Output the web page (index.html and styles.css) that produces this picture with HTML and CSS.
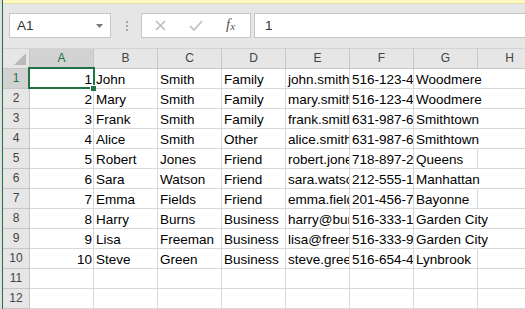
FILE: index.html
```html
<!DOCTYPE html>
<html lang="en">
<head>
    <meta charset="UTF-8">
    <meta name="viewport" content="width=device-width, initial-scale=1.0">
    <title>Contacts - Excel</title>
    <link rel="stylesheet" href="styles.css">
</head>
<body>
    <div class="window">
        <div class="edge"></div>
        <div class="app">
            <div class="notice"></div>

            <div class="formula-bar">
                <div class="name-box">
                    <span>A1</span>
                    <svg class="drop" width="7" height="4" viewBox="0 0 7 4"><polygon points="0,0 7,0 3.5,4" /></svg>
                </div>
                <svg class="grip" width="2" height="10" viewBox="0 0 2 10">
                    <rect x="0" y="0" width="2" height="2" />
                    <rect x="0" y="4" width="2" height="2" />
                    <rect x="0" y="8" width="2" height="2" />
                </svg>
                <div class="fx-buttons">
                    <svg width="11" height="11" viewBox="0 0 11 11"><path d="M1 1 L10 10 M10 1 L1 10" /></svg>
                    <svg width="14" height="11" viewBox="0 0 14 11"><path d="M1 6 L5 10 L13 1" /></svg>
                    <span class="fx">f<span class="fx-x">x</span></span>
                </div>
                <div class="formula-input">1</div>
            </div>

            <div class="sheet-wrap">
                <div class="sheet">
                    <div class="corner">
                        <svg width="26" height="19" viewBox="0 0 26 19"><polygon points="23,4 23,16 11,16" /></svg>
                    </div>
                    <div class="col-head active">A</div>
                    <div class="col-head">B</div>
                    <div class="col-head">C</div>
                    <div class="col-head">D</div>
                    <div class="col-head">E</div>
                    <div class="col-head">F</div>
                    <div class="col-head">G</div>
                    <div class="col-head">H</div>

                    <div class="row-head active">1</div>
                    <div class="cell num">1</div>
                    <div class="cell">John</div>
                    <div class="cell">Smith</div>
                    <div class="cell">Family</div>
                    <div class="cell">john.smith@gmail.com</div>
                    <div class="cell">516-123-4567</div>
                    <div class="cell spill">Woodmere</div>
                    <div class="cell"></div>

                    <div class="row-head">2</div>
                    <div class="cell num">2</div>
                    <div class="cell">Mary</div>
                    <div class="cell">Smith</div>
                    <div class="cell">Family</div>
                    <div class="cell">mary.smith@gmail.com</div>
                    <div class="cell">516-123-4589</div>
                    <div class="cell spill">Woodmere</div>
                    <div class="cell"></div>

                    <div class="row-head">3</div>
                    <div class="cell num">3</div>
                    <div class="cell">Frank</div>
                    <div class="cell">Smith</div>
                    <div class="cell">Family</div>
                    <div class="cell">frank.smith@yahoo.com</div>
                    <div class="cell">631-987-6543</div>
                    <div class="cell spill">Smithtown</div>
                    <div class="cell"></div>

                    <div class="row-head">4</div>
                    <div class="cell num">4</div>
                    <div class="cell">Alice</div>
                    <div class="cell">Smith</div>
                    <div class="cell">Other</div>
                    <div class="cell">alice.smith@yahoo.com</div>
                    <div class="cell">631-987-6521</div>
                    <div class="cell spill">Smithtown</div>
                    <div class="cell"></div>

                    <div class="row-head">5</div>
                    <div class="cell num">5</div>
                    <div class="cell">Robert</div>
                    <div class="cell">Jones</div>
                    <div class="cell">Friend</div>
                    <div class="cell">robert.jones@aol.com</div>
                    <div class="cell">718-897-2345</div>
                    <div class="cell">Queens</div>
                    <div class="cell"></div>

                    <div class="row-head">6</div>
                    <div class="cell num">6</div>
                    <div class="cell">Sara</div>
                    <div class="cell">Watson</div>
                    <div class="cell">Friend</div>
                    <div class="cell">sara.watson@gmail.com</div>
                    <div class="cell">212-555-1234</div>
                    <div class="cell spill">Manhattan</div>
                    <div class="cell"></div>

                    <div class="row-head">7</div>
                    <div class="cell num">7</div>
                    <div class="cell">Emma</div>
                    <div class="cell">Fields</div>
                    <div class="cell">Friend</div>
                    <div class="cell">emma.fields@gmail.com</div>
                    <div class="cell">201-456-7890</div>
                    <div class="cell">Bayonne</div>
                    <div class="cell"></div>

                    <div class="row-head">8</div>
                    <div class="cell num">8</div>
                    <div class="cell">Harry</div>
                    <div class="cell">Burns</div>
                    <div class="cell">Business</div>
                    <div class="cell">harry@burnsco.com</div>
                    <div class="cell">516-333-1234</div>
                    <div class="cell spill">Garden City</div>
                    <div class="cell"></div>

                    <div class="row-head">9</div>
                    <div class="cell num">9</div>
                    <div class="cell">Lisa</div>
                    <div class="cell">Freeman</div>
                    <div class="cell">Business</div>
                    <div class="cell">lisa@freeman.com</div>
                    <div class="cell">516-333-9876</div>
                    <div class="cell spill">Garden City</div>
                    <div class="cell"></div>

                    <div class="row-head">10</div>
                    <div class="cell num">10</div>
                    <div class="cell">Steve</div>
                    <div class="cell">Green</div>
                    <div class="cell">Business</div>
                    <div class="cell">steve.green@gmail.com</div>
                    <div class="cell">516-654-4321</div>
                    <div class="cell">Lynbrook</div>
                    <div class="cell"></div>

                    <div class="row-head">11</div>
                    <div class="cell"></div>
                    <div class="cell"></div>
                    <div class="cell"></div>
                    <div class="cell"></div>
                    <div class="cell"></div>
                    <div class="cell"></div>
                    <div class="cell"></div>
                    <div class="cell"></div>

                    <div class="row-head">12</div>
                    <div class="cell"></div>
                    <div class="cell"></div>
                    <div class="cell"></div>
                    <div class="cell"></div>
                    <div class="cell"></div>
                    <div class="cell"></div>
                    <div class="cell"></div>
                    <div class="cell"></div>
                </div>

                <!-- active cell outline sits over the grid -->
                <div class="selection"><div class="fill-handle"></div></div>
            </div>
        </div>
    </div>
</body>
</html>
```

FILE: styles.css
```css
body {
    margin: 0;
    padding: 0;
    overflow: hidden;
    background-color: #e6e6e6;
    font-family: "Liberation Sans", Arial, sans-serif;
    color: #000;
}

.window {
    display: flex;
    height: 309px;
}

.edge {
    width: 2px;
    background-color: #e0e0e0;
    border-right: 1px solid #1e7145; /* green app frame */
}

.app {
    flex: 1;
    min-width: 0;
    overflow: hidden;
}

.notice {
    height: 3px;
    background-color: #fdf6bd;
    border-bottom: 1px solid #e3deae;
}

/* name box + formula bar */
.formula-bar {
    box-sizing: border-box;
    height: 45px;
    display: flex;
    align-items: flex-start;
    padding: 9px 0 0 6px;
    background-color: #e6e6e6;
    border-bottom: 1px solid #d4d4d4;
}

.name-box {
    box-sizing: border-box;
    width: 102px;
    height: 25px;
    display: flex;
    align-items: center;
    padding: 0 7px;
    background-color: #fff;
    border: 1px solid #c6c6c6;
    font-size: 13.5px;
    color: #333;
}

.name-box .drop {
    margin-left: auto;
    fill: #777;
}

.grip {
    margin: 8px 13px 0 15px;
    fill: #a6a6a6;
}

.fx-buttons {
    box-sizing: border-box;
    width: 110px;
    height: 25px;
    display: flex;
    align-items: center;
    gap: 23px;
    padding-left: 13px;
    background-color: #fff;
    border: 1px solid #c6c6c6;
}

.fx-buttons svg path {
    fill: none;
    stroke: #bdbdbd;
    stroke-width: 1.6;
}

.fx {
    font-family: "Liberation Serif", "Times New Roman", serif;
    font-style: italic;
    font-size: 15px;
    color: #555;
    margin-top: -2px;
}

.fx-x {
    font-size: 11px;
    position: relative;
    top: 1px;
}

.formula-input {
    box-sizing: border-box;
    flex: 1;
    height: 25px;
    margin-left: 3px;
    padding-left: 10px;
    line-height: 23px;
    background-color: #fff;
    border: 1px solid #c6c6c6;
    border-right: none;
    font-size: 13.5px;
    color: #333;
}

/* worksheet grid */
.sheet-wrap {
    position: relative;
}

.sheet {
    display: grid;
    grid-template-columns: 27px repeat(8, 64px);
    grid-auto-rows: 20px;
    background-color: #fff;
}

.corner,
.col-head,
.row-head,
.cell {
    box-sizing: border-box;
    white-space: nowrap;
    overflow: hidden;
}

.corner {
    background-color: #e6e6e6;
    border-right: 1px solid #c6c6c6;
    border-bottom: 1px solid #c6c6c6;
}

.corner svg {
    display: block;
    fill: #bababa;
}

.col-head,
.row-head {
    background-color: #e6e6e6;
    border-right: 1px solid #c6c6c6;
    border-bottom: 1px solid #c6c6c6;
    text-align: center;
    font-size: 12px;
    line-height: 19px;
    color: #444;
}

.col-head.active,
.row-head.active {
    background-color: #d2d2d2;
    color: #217346;
}

.cell {
    padding: 0 2px;
    border-right: 1px solid #d9d9d9;
    border-bottom: 1px solid #d9d9d9;
    font-size: 13.5px;
    line-height: 21px;
}

.cell.num {
    text-align: right;
    padding-right: 1px;
}

/* text running on into the empty column next to it */
.cell.spill {
    overflow: visible;
    border-right-color: transparent;
}

.selection {
    position: absolute;
    left: 25px;
    top: 18px;
    width: 67px;
    height: 22px;
    box-sizing: border-box;
    border: 2px solid #217346;
}

.fill-handle {
    position: absolute;
    left: 60px;
    top: 16px;
    width: 5px;
    height: 5px;
    background-color: #217346;
    border: 1px solid #fff;
    border-right: none;
    border-bottom: none;
}
```
